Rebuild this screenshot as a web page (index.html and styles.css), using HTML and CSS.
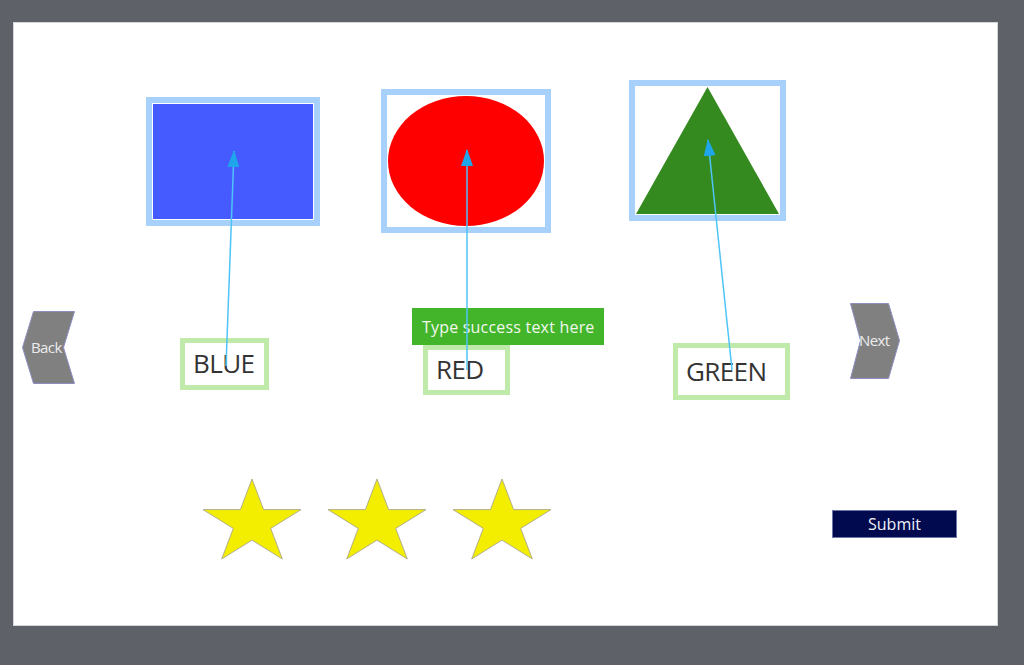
FILE: index.html
```html
<!DOCTYPE html>
<html>
<head>
<meta charset="utf-8">
<link rel="stylesheet" href="styles.css">
</head>
<body>
<div class="stage">
  <div class="target target-blue"><div class="rect-fill"></div></div>
  <div class="target target-red"><div class="ellipse-fill"></div></div>
  <div class="target target-green"><div class="tri-fill"></div></div>

  <div class="nav nav-back">
    <svg class="nav-shape" viewBox="0 0 54 75" width="54" height="75"><polygon points="11.5,0.5 52.5,0.5 41.5,36.5 52.5,72.5 11.5,72.5 0.5,36.5" fill="#808080" stroke="#8e8ec4" stroke-width="1"/></svg>
    <span class="nav-text">Back</span>
  </div>
  <div class="nav nav-next">
    <svg class="nav-shape" viewBox="0 0 51 77" width="51" height="77"><polygon points="0.5,0.5 38.5,0.5 49.5,37.5 38.5,75.5 0.5,75.5 10.5,37.5" fill="#808080" stroke="#8e8ec4" stroke-width="1"/></svg>
    <span class="nav-text">Next</span>
  </div>

  <div class="feedback">Type success text here</div>

  <div class="label label-blue">BLUE</div>
  <div class="label label-red">RED</div>
  <div class="label label-green">GREEN</div>

  <svg class="links" width="983" height="602" viewBox="0 0 983 602">
    <defs>
      <marker id="head" viewBox="0 0 17 12" refX="16" refY="6" markerWidth="17" markerHeight="12" markerUnits="userSpaceOnUse" orient="auto">
        <path d="M0,0 L17,6 L0,12 Z" fill="#1fa6ea"/>
      </marker>
    </defs>
    <line x1="212" y1="343" x2="220" y2="128" stroke="#4fc4f8" stroke-width="1.5" marker-end="url(#head)"/>
    <line x1="453" y1="347" x2="453" y2="127" stroke="#4fc4f8" stroke-width="1.5" marker-end="url(#head)"/>
    <line x1="718" y1="347" x2="694" y2="117" stroke="#4fc4f8" stroke-width="1.5" marker-end="url(#head)"/>
  </svg>

  <div class="stars">
    <svg class="star" viewBox="-1 -1 100 82" width="100" height="82"><polygon points="49,0 60.6,30.6 98,30.6 67.7,49.4 79.3,80 49,61.1 18.7,80 30.3,49.4 0,30.6 37.4,30.6" fill="#f3ed00" stroke="#b3b08a" stroke-width="1"/></svg>
    <svg class="star" viewBox="-1 -1 100 82" width="100" height="82"><polygon points="49,0 60.6,30.6 98,30.6 67.7,49.4 79.3,80 49,61.1 18.7,80 30.3,49.4 0,30.6 37.4,30.6" fill="#f3ed00" stroke="#b3b08a" stroke-width="1"/></svg>
    <svg class="star" viewBox="-1 -1 100 82" width="100" height="82"><polygon points="49,0 60.6,30.6 98,30.6 67.7,49.4 79.3,80 49,61.1 18.7,80 30.3,49.4 0,30.6 37.4,30.6" fill="#f3ed00" stroke="#b3b08a" stroke-width="1"/></svg>
  </div>

  <div class="submit">Submit</div>
</div>
</body>
</html>
```

FILE: styles.css
```css
html, body {
  margin: 0;
  padding: 0;
}
body {
  background: #5e6168;
  width: 1024px;
  height: 665px;
  overflow: hidden;
  font-family: "Open Sans", "Noto Sans", "DejaVu Sans", sans-serif;
}
.stage {
  position: relative;
  margin: 23px 0 0 14px;
  width: 983px;
  height: 602px;
  background: #ffffff;
  box-shadow: 0 0 0 1px #d4d6da;
}
.target {
  position: absolute;
  box-sizing: border-box;
  border: 6px solid #a7d0fb;
  padding: 1px;
  display: flex;
}
.target-blue { left: 132px; top: 74px; width: 174px; height: 129px; }
.target-red { left: 367px; top: 66px; width: 170px; height: 144px; }
.target-green { left: 615px; top: 57px; width: 157px; height: 141px; }
.rect-fill {
  flex: 1;
  background: #455bff;
}
.ellipse-fill {
  flex: 1;
  background: #ff0000;
  border-radius: 50%;
}
.tri-fill {
  flex: 1;
  background: #34891f;
  clip-path: polygon(50% 0, 100% 100%, 0 100%);
}
.nav {
  position: absolute;
}
.nav-shape { display: block; }
.nav-back { left: 8px; top: 288px; width: 54px; height: 75px; }
.nav-next { left: 836px; top: 280px; width: 51px; height: 77px; }
.nav-text {
  position: absolute;
  top: 0;
  bottom: 4px;
  display: flex;
  align-items: center;
  color: #ececec;
  font-size: 15px;
  letter-spacing: -0.6px;
}
.nav-back .nav-text { left: 9px; }
.nav-next .nav-text { left: 9px; }
.feedback {
  position: absolute;
  left: 398px;
  top: 285px;
  width: 192px;
  height: 37px;
  box-sizing: border-box;
  background: #43b52a;
  color: #f2f7ef;
  font-size: 16px;
  display: flex;
  align-items: center;
  padding-left: 10px;
  letter-spacing: 0.2px;
  white-space: nowrap;
}
.label {
  position: absolute;
  box-sizing: border-box;
  border: 5px solid #bfeaa9;
  background: #ffffff;
  color: #333333;
  font-size: 26px;
  letter-spacing: -0.6px;
  display: flex;
  align-items: center;
  padding-left: 8px;
  padding-bottom: 2px;
  white-space: nowrap;
}
.label-blue { left: 166px; top: 315px; width: 89px; height: 52px; }
.label-red { left: 409px; top: 322px; width: 87px; height: 50px; }
.label-green { left: 659px; top: 320px; width: 117px; height: 57px; }
.links {
  position: absolute;
  left: 0;
  top: 0;
  pointer-events: none;
}
.stars {
  position: absolute;
  left: 188px;
  top: 455px;
  display: flex;
  gap: 25px;
}
.star { display: block; }
.submit {
  position: absolute;
  left: 818px;
  top: 487px;
  width: 125px;
  height: 28px;
  box-sizing: border-box;
  background: #010a4f;
  border: 1px solid #6f76a6;
  color: #eef0f8;
  font-size: 16px;
  display: flex;
  align-items: center;
  justify-content: center;
}
```
